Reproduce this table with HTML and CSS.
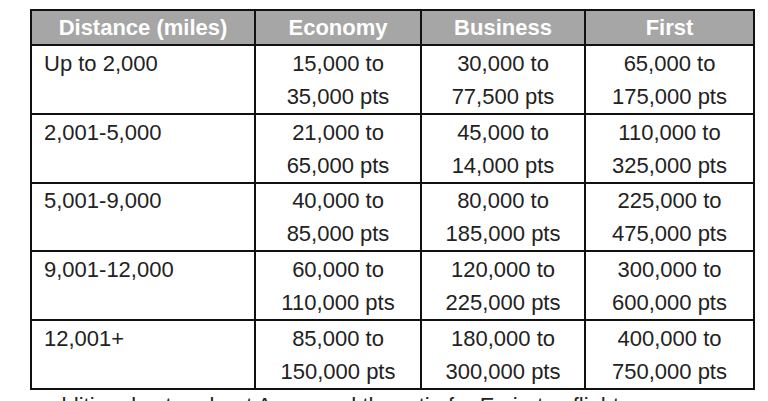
FILE: index.html
```html
<!DOCTYPE html>
<html>
<head>
<meta charset="utf-8">
<link rel="stylesheet" href="styles.css">
</head>
<body>
<div class="page">
  <table class="awards">
    <colgroup>
      <col class="c1"><col class="c2"><col class="c3"><col class="c4">
    </colgroup>
    <thead>
      <tr><th>Distance (miles)</th><th>Economy</th><th>Business</th><th>First</th></tr>
    </thead>
    <tbody>
      <tr><td class="dist">Up to 2,000</td><td>15,000 to<br>35,000 pts</td><td>30,000 to<br>77,500 pts</td><td>65,000 to<br>175,000 pts</td></tr>
      <tr><td class="dist">2,001-5,000</td><td>21,000 to<br>65,000 pts</td><td>45,000 to<br>14,000 pts</td><td>110,000 to<br>325,000 pts</td></tr>
      <tr><td class="dist">5,001-9,000</td><td>40,000 to<br>85,000 pts</td><td>80,000 to<br>185,000 pts</td><td>225,000 to<br>475,000 pts</td></tr>
      <tr><td class="dist">9,001-12,000</td><td>60,000 to<br>110,000 pts</td><td>120,000 to<br>225,000 pts</td><td>300,000 to<br>600,000 pts</td></tr>
      <tr><td class="dist">12,001+</td><td>85,000 to<br>150,000 pts</td><td>180,000 to<br>300,000 pts</td><td>400,000 to<br>750,000 pts</td></tr>
    </tbody>
  </table>
  <p class="note">additional extra about Amex and the ratio for Emirates flights</p>
</div>
</body>
</html>
```

FILE: styles.css
```css
html, body {
  margin: 0;
  padding: 0;
  background: #ffffff;
}
body {
  font-family: "Liberation Sans", Arial, sans-serif;
  color: #222222;
  overflow: hidden;
  height: 401px;
}
.page {
  padding: 9px 0 0 30px;
}
.awards {
  border-collapse: collapse;
  table-layout: fixed;
  width: 723px;
  font-size: 22px;
}
.c1 { width: 224px; }
.c2 { width: 166px; }
.c3 { width: 164px; }
.c4 { width: 169px; }
.awards th,
.awards td {
  border: 2px solid #111111;
  padding: 0;
}
.awards th {
  background: #a6a6a6;
  color: #ffffff;
  font-weight: bold;
  line-height: 33px;
  text-align: center;
}
.awards td {
  line-height: 33px;
  padding-top: 0.8px;
  text-align: center;
  vertical-align: top;
}
.awards td.dist {
  text-align: left;
  padding-left: 12px;
}
.note {
  margin: 3px 0 0 12px;
  font-size: 22px;
  line-height: 26px;
}
```
